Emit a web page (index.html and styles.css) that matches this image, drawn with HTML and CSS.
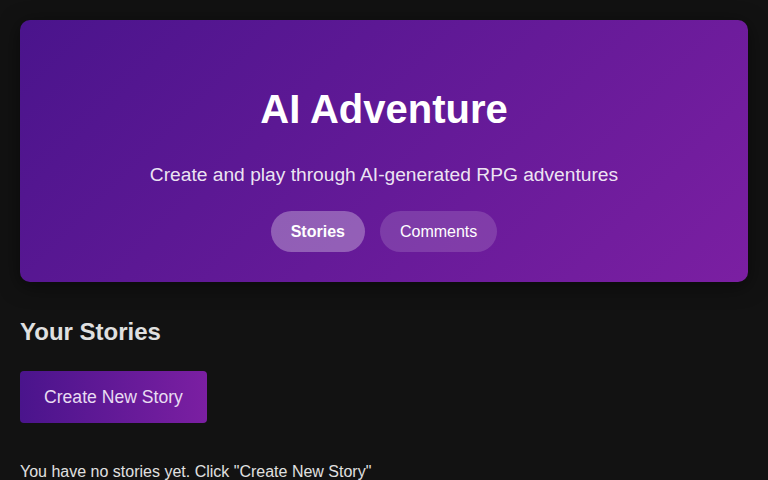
FILE: index.html
```html
<!DOCTYPE html>
<html lang="en">
<head>
<meta charset="utf-8">
<title>AI Adventure</title>
<link rel="stylesheet" href="styles.css">
</head>
<body>
<div class="app">
  <header class="hero">
    <h1 class="hero-title">AI Adventure</h1>
    <p class="hero-sub">Create and play through AI-generated RPG adventures</p>
    <nav class="tabs">
      <button class="tab tab-active">Stories</button>
      <button class="tab">Comments</button>
    </nav>
  </header>
  <main class="stories">
    <h2 class="section-title">Your Stories</h2>
    <button class="create-btn">Create New Story</button>
    <p class="empty">You have no stories yet. Click "Create New Story"</p>
  </main>
</div>
</body>
</html>
```
FILE: styles.css
```css
html, body {
  margin: 0;
  padding: 0;
  background: #121212;
  font-family: "Liberation Sans", Arial, sans-serif;
  color: #e0e0e0;
}
.app {
  padding: 20px;
}
.hero {
  background: linear-gradient(135deg, #4a148c 0%, #7b1fa2 100%);
  border-radius: 10px;
  box-shadow: 0 4px 20px rgba(0, 0, 0, 0.5);
  padding: 65px 20px 30px;
  text-align: center;
}
.hero-title {
  margin: 0;
  font-size: 40px;
  line-height: 48px;
  font-weight: 700;
  color: #ffffff;
}
.hero-sub {
  margin: 30px 0 0;
  font-size: 19.2px;
  line-height: 24px;
  color: rgba(255, 255, 255, 0.9);
}
.tabs {
  margin-top: 24px;
  display: flex;
  justify-content: center;
  gap: 15px;
}
.tab {
  border: none;
  border-radius: 21px;
  padding: 11px 20px;
  font-family: inherit;
  font-size: 16px;
  line-height: 19px;
  color: #ffffff;
  background: rgba(255, 255, 255, 0.15);
  cursor: pointer;
}
.tab-active {
  background: rgba(255, 255, 255, 0.3);
  font-weight: 700;
}
.stories {
  padding-top: 36px;
}
.section-title {
  margin: 0;
  font-size: 24px;
  line-height: 28px;
  font-weight: 700;
  color: #e0e0e0;
}
.create-btn {
  margin-top: 25px;
  border: none;
  border-radius: 4px;
  padding: 15px 24px;
  font-family: inherit;
  font-size: 17.6px;
  line-height: 22px;
  color: #e8dcf2;
  background: linear-gradient(90deg, #4a148c 0%, #7b1fa2 100%);
  cursor: pointer;
}
.empty {
  margin: 40px 0 0;
  font-size: 16px;
  line-height: 18px;
  color: #e0e0e0;
}
```
